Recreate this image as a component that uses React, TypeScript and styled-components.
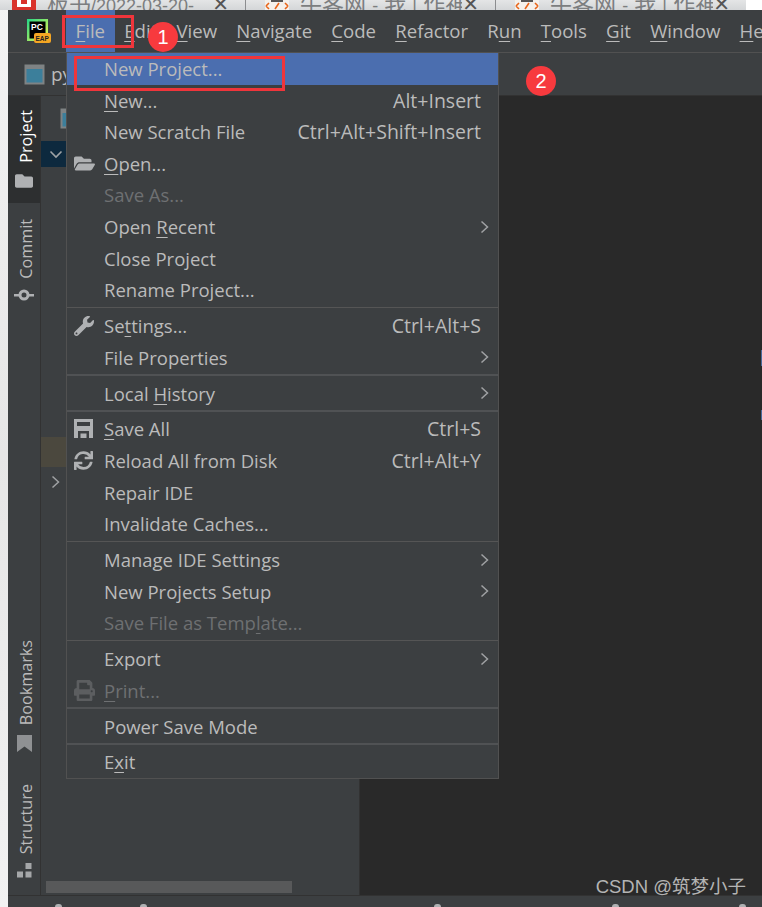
import React, {FC, ReactNode} from 'react';
import styled, {createGlobalStyle} from 'styled-components';
import {FaFolderOpen, FaWrench, FaSync, FaPrint, FaFolder} from 'react-icons/fa';

const UI_FONT = '"Open Sans", "Noto Sans", sans-serif';

const GlobalStyle = createGlobalStyle`
  html, body {
    margin: 0;
    padding: 0;
    background: #ececec;
  }
`;

const SaveIcon: FC = () => (
  <svg width="19" height="19" viewBox="0 0 19 19">
    <path d="M0 0H19V19H0Z M3 3V7H16V3Z M4 12V19H15V12Z" fill="currentColor" fillRule="evenodd" />
    <rect x="6.5" y="14.5" width="6" height="4.5" fill="currentColor" />
  </svg>
);

type MenuEntry =
  | {sep: true; thick?: boolean}
  | {
      sep?: false;
      label: string;
      shortcut?: string;
      sub?: boolean;
      disabled?: boolean;
      selected?: boolean;
      icon?: ReactNode;
    };

// "&" marks the mnemonic letter, same as the menu definitions in the IDE
const MENU_ITEMS: MenuEntry[] = [
  {label: 'New Project...', selected: true},
  {label: '&New...', shortcut: 'Alt+Insert'},
  {label: 'New Scratch File', shortcut: 'Ctrl+Alt+Shift+Insert'},
  {label: '&Open...', icon: <FaFolderOpen size={21} />},
  {label: 'Save As...', disabled: true},
  {label: 'Open &Recent', sub: true},
  {label: 'Close Project'},
  {label: 'Rename Project...'},
  {sep: true},
  {label: 'Se&ttings...', shortcut: 'Ctrl+Alt+S', icon: <FaWrench size={20} />},
  {label: 'File Properties', sub: true},
  {sep: true, thick: true},
  {label: 'Local &History', sub: true},
  {sep: true, thick: true},
  {label: '&Save All', shortcut: 'Ctrl+S', icon: <SaveIcon />},
  {label: 'Reload All from Disk', shortcut: 'Ctrl+Alt+Y', icon: <FaSync size={19} />},
  {label: 'Repair IDE'},
  {label: 'Invalidate Caches...'},
  {sep: true},
  {label: 'Manage IDE Settings', sub: true},
  {label: 'New Projects Setup', sub: true},
  {label: 'Save File as Temp&late...', disabled: true},
  {sep: true},
  {label: 'Export', sub: true},
  {label: '&Print...', disabled: true, icon: <FaPrint size={21} />},
  {sep: true, thick: true},
  {label: 'Power Save Mode'},
  {sep: true, thick: true},
  {label: 'E&xit'},
];

const MENU_BAR = ['&File', '&Edit', '&View', '&Navigate', '&Code', '&Refactor', 'R&un', '&Tools', '&Git', '&Window', '&Help'];

const withMnemonic = (text: string) => {
  const at = text.indexOf('&');
  if (at < 0) return text;
  return (
    <>
      {text.slice(0, at)}
      <u>{text[at + 1]}</u>
      {text.slice(at + 2)}
    </>
  );
};

const Chevron: FC = () => (
  <ArrowIcon viewBox="0 0 9 14">
    <polyline points="1.5,1.5 7.5,7 1.5,12.5" />
  </ArrowIcon>
);

const WindowIcon: FC = () => (
  <svg width="21" height="21" viewBox="0 0 21 21">
    <rect x="0.5" y="0.5" width="20" height="20" fill="#7f8384" />
    <rect x="2.5" y="5" width="16" height="13.5" fill="#3c7f9b" />
  </svg>
);

const PyCharmLogo: FC = () => (
  <svg width="24" height="24" viewBox="0 0 24 24">
    <defs>
      <linearGradient id="pc-edge" x1="0" y1="0" x2="1" y2="1">
        <stop offset="0" stopColor="#21d789" />
        <stop offset="1" stopColor="#fcf84a" />
      </linearGradient>
    </defs>
    <rect width="21" height="22" fill="url(#pc-edge)" />
    <rect x="2.5" y="2.5" width="16" height="17" fill="#000" />
    <text x="4" y="11" fontFamily="Liberation Sans" fontWeight="700" fontSize="8.5" fill="#fff">PC</text>
    <rect x="7" y="14" width="17" height="10" rx="2" fill="#f5a623" />
    <text x="8.5" y="22" fontFamily="Liberation Sans" fontWeight="700" fontSize="6.5" fill="#222">EAP</text>
  </svg>
);

const CommitIcon: FC = () => (
  <svg width="20" height="14" viewBox="0 0 20 14">
    <circle cx="10" cy="7" r="4" fill="none" stroke="#afb1b3" strokeWidth="3" />
    <rect x="0" y="6" width="5" height="2.5" fill="#afb1b3" />
    <rect x="15" y="6" width="5" height="2.5" fill="#afb1b3" />
  </svg>
);

const BookmarkIcon: FC = () => (
  <svg width="15" height="17" viewBox="0 0 15 17">
    <polygon points="0,0 15,0 15,17 7.5,11.5 0,17" fill="#8f9193" />
  </svg>
);

const StructureIcon: FC = () => (
  <svg width="15" height="15" viewBox="0 0 15 15" fill="#a5a7a9">
    <rect x="8.5" y="0" width="6" height="6" />
    <rect x="0" y="8.5" width="6" height="6" />
    <rect x="8.5" y="8.5" width="6" height="6" />
  </svg>
);

const TabLogo: FC<{red?: boolean}> = ({red}) =>
  red ? (
    <svg width="24" height="10" viewBox="0 0 24 10">
      <rect width="24" height="10" fill="#d9322b" />
      <rect x="5" y="0" width="14" height="7" fill="#fff" />
      <rect x="9" y="0" width="6" height="4" fill="#d9322b" />
    </svg>
  ) : (
    <svg width="24" height="10" viewBox="0 0 24 10">
      <rect width="24" height="10" fill="#f4f1ec" />
      <path d="M1 6 L4 3 M1 6 L4 9 M23 6 L20 3 M23 6 L20 9 M10 9 L14 3" stroke="#e8651a" strokeWidth="1.6" fill="none" />
      <rect x="6" y="0" width="12" height="2" fill="#555" />
    </svg>
  );

const App: FC = () => (
  <Page>
    <GlobalStyle />
    <BrowserBar>
      <BrowserTab $width={246}>
        <TabLogo red />
        <TabTitle>
          板书<TabLatin>/2022-03-20-</TabLatin>
        </TabTitle>
        <TabClose>✕</TabClose>
      </BrowserTab>
      <BrowserTab $width={250}>
        <TabLogo />
        <TabTitle>
          牛客网 <TabLatin>-</TabLatin> 我 <TabLatin>|</TabLatin> 作神
        </TabTitle>
        <TabClose>✕</TabClose>
      </BrowserTab>
      <BrowserTab $width={250}>
        <TabLogo />
        <TabTitle>
          牛客网 <TabLatin>-</TabLatin> 我 <TabLatin>|</TabLatin> 作神
        </TabTitle>
        <TabClose>✕</TabClose>
      </BrowserTab>
    </BrowserBar>

    <Ide>
      <MenuBar>
        <LogoSlot>
          <PyCharmLogo />
        </LogoSlot>
        {MENU_BAR.map((name, i) => (
          <MenuBarItem key={name} $active={i === 0}>
            {withMnemonic(name)}
          </MenuBarItem>
        ))}
      </MenuBar>

      <Toolbar>
        <WindowIcon />
        <ToolbarLabel>pycharm</ToolbarLabel>
      </Toolbar>

      <Workspace>
        <ToolStripe>
          <StripeButton $active>
            <VerticalLabel $active>Project</VerticalLabel>
            <FaFolder size={18} />
          </StripeButton>
          <StripeButton>
            <VerticalLabel>Commit</VerticalLabel>
            <CommitIcon />
          </StripeButton>
          <StripeSpacer />
          <StripeButton>
            <VerticalLabel>Bookmarks</VerticalLabel>
            <BookmarkIcon />
          </StripeButton>
          <StripeButton>
            <VerticalLabel>Structure</VerticalLabel>
            <StructureIcon />
          </StripeButton>
        </ToolStripe>

        <ProjectPanel>
          <PanelHeader>
            <WindowIcon />
          </PanelHeader>
          <SelectedRow>
            <PanelChevron viewBox="0 0 14 9">
              <polyline points="1.5,1.5 7,7 12.5,1.5" />
            </PanelChevron>
          </SelectedRow>
          <TreeGap />
          <BrownRow />
          <CollapsedRow>
            <Chevron />
          </CollapsedRow>
          <PanelFill />
          <ScrollTrack>
            <ScrollThumb />
          </ScrollTrack>
        </ProjectPanel>

        <Editor>
          <EdgeMark $top={254} $height={16} />
          <EdgeMark $top={314} $height={10} />
          <Watermark>CSDN @筑梦小子</Watermark>
        </Editor>
      </Workspace>

      <StatusBar>
        <StatusTip $left={47} />
        <StatusTip $left={78} />
        <StatusTip $left={287} />
        <StatusTip $left={171} />
        <StatusTip $left={120} />
      </StatusBar>
    </Ide>

    <Menu>
      {MENU_ITEMS.map((item, i) =>
        item.sep ? (
          <Separator key={i} $thick={item.thick} />
        ) : (
          <MenuRow key={i} $selected={item.selected} $disabled={item.disabled}>
            <IconSlot $disabled={item.disabled}>{item.icon}</IconSlot>
            <RowLabel>{withMnemonic(item.label)}</RowLabel>
            {item.shortcut && <Shortcut>{item.shortcut}</Shortcut>}
            {item.sub && <Chevron />}
          </MenuRow>
        ),
      )}
    </Menu>

    <RedBox $left={62} $top={15} $width={72} $height={33} />
    <RedBox $left={74} $top={56} $width={211} $height={35} />
    <StepBadge $left={148} $top={22}>1</StepBadge>
    <StepBadge $left={526} $top={66}>2</StepBadge>
  </Page>
);

const Page = styled.div`
  position: relative;
  width: 762px;
  height: 907px;
  overflow: hidden;
  background: linear-gradient(180deg, #f4f4f4 0%, #e6e6e6 50%, #f2f2f2 100%);
  font-family: ${UI_FONT};
`;

const BrowserBar = styled.div`
  display: flex;
  height: 10px;
  overflow: hidden;
  background: #fff;
`;

const BrowserTab = styled.div<{$width: number}>`
  display: flex;
  align-items: flex-start;
  flex: none;
  box-sizing: border-box;
  width: ${({$width}) => $width}px;
  padding: 0 16px 0 19px;
  background: linear-gradient(180deg, #e4e5e6, #d4d6d8);
  border-right: 1px solid #8b8d8f;
  &:first-child {
    padding-left: 12px;
  }
  &:last-child {
    border-right: none;
  }
`;

const TabTitle = styled.span`
  flex: 1;
  margin: -7px 0 0 11px;
  font: 22px/24px "Liberation Sans", "Noto Sans CJK SC", sans-serif;
  color: #7c7e80;
  white-space: nowrap;
  overflow: hidden;
`;

const TabLatin = styled.span`
  font-size: 18px;
`;

const TabClose = styled.span`
  margin-top: -7px;
  font: 20px/22px "DejaVu Sans", sans-serif;
  color: #555;
`;

const Ide = styled.div`
  display: flex;
  flex-direction: column;
  height: 897px;
  margin-left: 8px;
  background: #3c3f41;
  color: #bbbbbb;
`;

const MenuBar = styled.div`
  display: flex;
  flex: none;
  height: 42px;
  border-bottom: 1px solid #515151;
  overflow: hidden;
  font-size: 18.6px;
`;

const LogoSlot = styled.div`
  display: flex;
  align-items: center;
  flex: none;
  width: 58px;
  padding-left: 19px;
  box-sizing: border-box;
`;

const MenuBarItem = styled.div<{$active?: boolean}>`
  flex: none;
  padding: 0 9.6px;
  line-height: 42px;
  white-space: nowrap;
  background: ${({$active}) => ($active ? '#4b6eaf' : 'transparent')};
  u {
    text-underline-offset: 3px;
    text-decoration-thickness: 1px;
  }
`;

const Toolbar = styled.div`
  display: flex;
  align-items: center;
  flex: none;
  height: 42px;
  padding-left: 16px;
  gap: 6px;
  border-bottom: 1px solid #323232;
`;

const ToolbarLabel = styled.span`
  font-size: 19px;
`;

const Workspace = styled.div`
  display: flex;
  flex: 1;
  min-height: 0;
`;

const ToolStripe = styled.div`
  display: flex;
  flex-direction: column;
  flex: none;
  width: 32px;
  border-right: 1px solid #323232;
  padding-bottom: 1px;
`;

const StripeSpacer = styled.div`
  flex: 1;
`;

const StripeButton = styled.div<{$active?: boolean}>`
  display: flex;
  flex-direction: column;
  align-items: center;
  gap: 9px;
  padding: ${({$active}) => ($active ? '14px 0 13px' : '16px 0')};
  color: #afb1b3;
  background: ${({$active}) => ($active ? '#2d2f30' : 'transparent')};
`;

const VerticalLabel = styled.span<{$active?: boolean}>`
  margin-left: 4px;
  writing-mode: vertical-rl;
  transform: rotate(180deg);
  font-size: 16.2px;
  line-height: 20px;
  color: ${({$active}) => ($active ? '#ffffff' : '#bbbbbb')};
`;

const ProjectPanel = styled.div`
  display: flex;
  flex-direction: column;
  flex: none;
  width: 318px;
  background: #3c3f41;
  border-right: 1px solid #323232;
`;

const PanelHeader = styled.div`
  display: flex;
  align-items: center;
  flex: none;
  height: 45px;
  padding-left: 19px;
`;

const SelectedRow = styled.div`
  display: flex;
  align-items: center;
  justify-content: center;
  flex: none;
  width: 28px;
  height: 26px;
  padding-left: 2px;
  box-sizing: border-box;
  background: #0d293e;
`;

const PanelChevron = styled.svg`
  width: 14px;
  height: 9px;
  polyline {
    fill: none;
    stroke: #9fa3a6;
    stroke-width: 1.6;
  }
`;

const TreeGap = styled.div`
  flex: none;
  height: 270px;
`;

const PanelFill = styled.div`
  flex: 1;
`;

const BrownRow = styled.div`
  flex: none;
  width: 25px;
  height: 30px;
  background: #4b483e;
`;

const CollapsedRow = styled.div`
  display: flex;
  align-items: center;
  flex: none;
  height: 30px;
  padding-left: 10px;
`;

const ScrollTrack = styled.div`
  flex: none;
  height: 13px;
  padding: 0 67px 1px 5px;
`;

const ScrollThumb = styled.div`
  height: 12px;
  background: #58595a;
`;

const Editor = styled.div`
  position: relative;
  flex: 1;
  background: #292929;
`;

const EdgeMark = styled.div<{$top: number; $height: number}>`
  position: absolute;
  right: 0;
  top: ${({$top}) => $top}px;
  width: 1px;
  height: ${({$height}) => $height}px;
  background: #4a6a9a;
`;

const Watermark = styled.div`
  position: absolute;
  right: 16px;
  bottom: -3px;
  font: 18.5px/22px "Liberation Sans", "Noto Sans CJK SC", sans-serif;
  color: #b4b4b4;
  white-space: nowrap;
`;

const StatusBar = styled.div`
  display: flex;
  align-items: flex-end;
  flex: none;
  height: 12px;
  box-sizing: border-box;
  border-top: 1px solid #323232;
  overflow: hidden;
`;

const StatusTip = styled.div<{$left: number}>`
  flex: none;
  width: 7px;
  height: 3px;
  margin-left: ${({$left}) => $left}px;
  border-radius: 4px 4px 0 0;
  background: #afb1b3;
`;

const Menu = styled.div`
  position: absolute;
  left: 66px;
  top: 53px;
  box-sizing: border-box;
  width: 433px;
  height: 726px;
  background: #3c3f41;
  border: 1px solid #515151;
  border-top: none;
  font-size: 18.5px;
`;

const MenuRow = styled.div<{$selected?: boolean; $disabled?: boolean}>`
  display: flex;
  align-items: center;
  height: 31.55px;
  padding-left: 7px;
  background: ${({$selected}) => ($selected ? '#4b6eaf' : 'transparent')};
  color: ${({$disabled}) => ($disabled ? '#6e7072' : '#bbbbbb')};
  u {
    text-underline-offset: 3px;
    text-decoration-thickness: 1px;
  }
`;

const IconSlot = styled.div<{$disabled?: boolean}>`
  display: flex;
  align-items: center;
  flex: none;
  width: 30px;
  color: ${({$disabled}) => ($disabled ? '#5c5e60' : '#afb1b3')};
`;

const RowLabel = styled.span`
  flex: 1;
  white-space: nowrap;
`;

const Shortcut = styled.span`
  margin-right: 17px;
  font-size: 19.5px;
  white-space: nowrap;
`;

const ArrowIcon = styled.svg`
  flex: none;
  width: 9px;
  height: 14px;
  margin-right: 9px;
  polyline {
    fill: none;
    stroke: #a0a2a4;
    stroke-width: 1.5;
  }
`;

const Separator = styled.div<{$thick?: boolean}>`
  display: flex;
  align-items: center;
  height: 4.4px;
  &::after {
    content: '';
    flex: 1;
    height: ${({$thick}) => ($thick ? 2 : 1)}px;
    background: ${({$thick}) => ($thick ? '#505254' : '#555555')};
  }
`;

const RedBox = styled.div<{$left: number; $top: number; $width: number; $height: number}>`
  position: absolute;
  left: ${({$left}) => $left}px;
  top: ${({$top}) => $top}px;
  width: ${({$width}) => $width}px;
  height: ${({$height}) => $height}px;
  box-sizing: border-box;
  border: 3px solid #f0353b;
`;

const StepBadge = styled.div<{$left: number; $top: number}>`
  position: absolute;
  left: ${({$left}) => $left}px;
  top: ${({$top}) => $top}px;
  width: 30px;
  height: 30px;
  border-radius: 50%;
  background: #f73a3e;
  color: #fff;
  font: 20px/30px "Liberation Sans", sans-serif;
  text-align: center;
`;

export default App;
